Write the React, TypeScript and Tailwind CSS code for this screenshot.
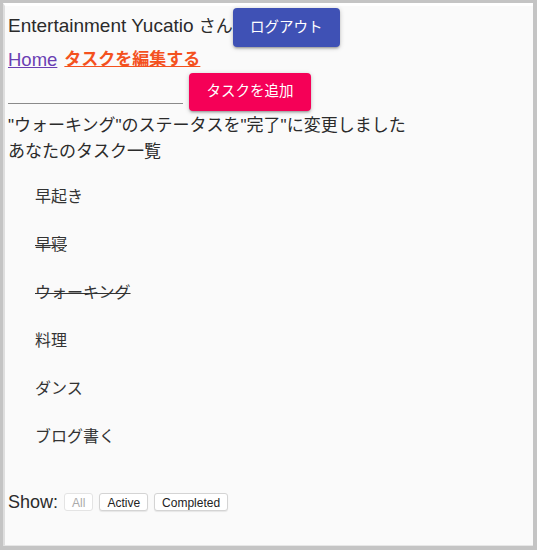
const tasks = [
  { id: 1, title: "早起き", done: false },
  { id: 2, title: "早寝", done: true },
  { id: 3, title: "ウォーキング", done: true },
  { id: 4, title: "料理", done: false },
  { id: 5, title: "ダンス", done: false },
  { id: 6, title: "ブログ書く", done: false },
];

const raised =
  "shadow-[0_1px_5px_rgba(0,0,0,0.2),0_2px_2px_rgba(0,0,0,0.14),0_3px_1px_-2px_rgba(0,0,0,0.12)]";

export default function App() {
  return (
    <div className="w-[537px] h-[550px] bg-[#c4c4c4] pt-[3px] pl-[3px] pr-[4px] pb-[4px] font-['Liberation_Sans','Noto_Sans_CJK_JP',sans-serif]">
      <div className="h-full bg-[#fafafa] border-t-[3px] border-t-white border-l-[2px] border-l-[#dedede] border-b border-b-[#e6e6e6] pl-[3px] text-[17px] text-[#2b2b2b]">
        {/* header */}
        <div className="flex items-center h-[41px]">
          <span className="leading-[26px]">
            <span className="text-[19px]">Entertainment Yucatio </span>さん
          </span>
          <button
            className={`mt-[2px] h-[39px] w-[107px] rounded bg-[#3f51b5] text-white text-[14.5px] ${raised}`}
          >
            ログアウト
          </button>
        </div>

        {/* links */}
        <div className="flex items-center h-[26px] leading-[26px] gap-[7px]">
          <a href="#" className="text-[18.5px] text-[#6a3fb3] underline">
            Home
          </a>
          <a href="#" className="font-bold text-[#f4511e] underline">
            タスクを編集する
          </a>
        </div>

        {/* add task */}
        <div className="flex items-end h-[38px] gap-[6px] mb-[2px]">
          <input
            className="mb-[7px] w-[175px] h-[24px] bg-transparent border-b border-b-[#8a8a8a] outline-none"
            aria-label="task"
          />
          <button
            className={`h-[38px] w-[122px] rounded bg-[#f50057] text-white text-[14.5px] ${raised}`}
          >
            タスクを追加
          </button>
        </div>

        <p className="leading-[26px]">"ウォーキング"のステータスを"完了"に変更しました</p>
        <p className="leading-[26px]">あなたのタスク一覧</p>

        {/* task list */}
        <ul className="py-2">
          {tasks.map((t) => (
            <li key={t.id} className="h-12 flex items-center pl-[27px] text-[16px] text-[#333]">
              <span className={t.done ? "line-through" : ""}>{t.title}</span>
            </li>
          ))}
        </ul>

        {/* filters */}
        <div className="mt-[20px] flex items-center h-[26px]">
          <span className="text-[18px] mr-[6px]">Show:</span>
          <div className="flex items-center gap-[6px] text-[12px]">
            <button disabled className="h-[18px] px-[7px] rounded-[3px] border border-[#e4e4e4] bg-white text-[#aaa]">
              All
            </button>
            <button className="h-[18px] px-[7px] rounded-[3px] border border-[#d4d4d4] bg-white text-[#222] shadow-[0_1px_1px_rgba(0,0,0,0.08)]">
              Active
            </button>
            <button className="h-[18px] px-[7px] rounded-[3px] border border-[#d4d4d4] bg-white text-[#222] shadow-[0_1px_1px_rgba(0,0,0,0.08)]">
              Completed
            </button>
          </div>
        </div>
      </div>
    </div>
  );
}
